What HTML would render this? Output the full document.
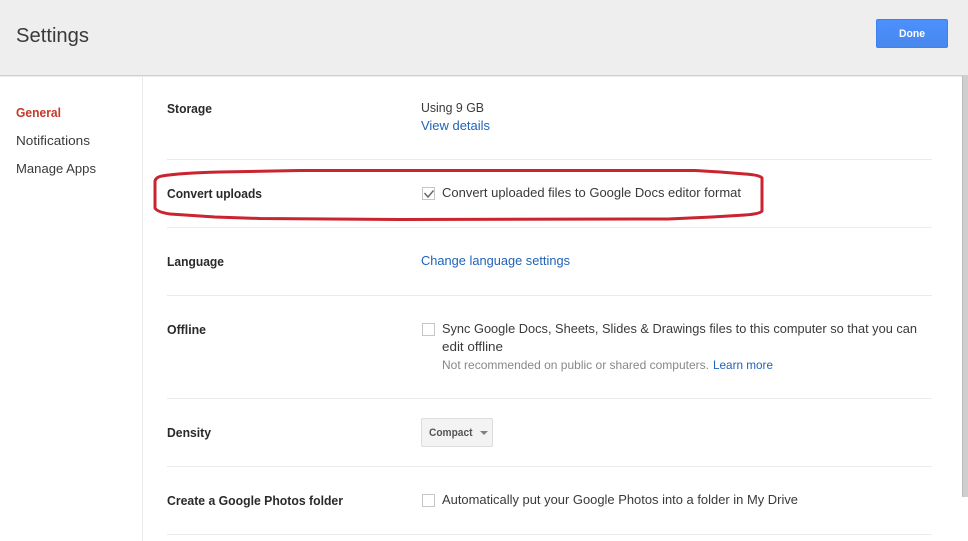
<!DOCTYPE html>
<html>
<head>
<meta charset="utf-8">
<style>
html,body{margin:0;padding:0;background:#fff;width:968px;height:541px;overflow:hidden}
svg{display:block;position:absolute;left:0;top:0}
text{font-family:"Liberation Sans",sans-serif;font-size:13px;fill:#3a3a3a}
.b{font-weight:700;fill:#2a2a2a}
.l{fill:#2163b8}
</style>
</head>
<body>
<svg width="968" height="541" viewBox="0 0 968 541" xmlns="http://www.w3.org/2000/svg">
<defs>
<linearGradient id="g" x1="0" y1="0" x2="0" y2="1"><stop offset="0" stop-color="#4d90fe"/><stop offset="1" stop-color="#4787ed"/></linearGradient>
</defs>
<rect x="0" y="0" width="968" height="75" fill="#eeeeee"/>
<rect x="0" y="75" width="968" height="1" fill="#cfcfcf"/>
<rect x="0" y="76" width="968" height="1" fill="#ececec"/>
<text x="16" y="42" style="font-size:20px;fill:#3a3a3a" textLength="73" lengthAdjust="spacingAndGlyphs">Settings</text>
<rect x="876.500" y="19.500" width="71" height="28" rx="1.500" fill="url(#g)" stroke="#3d82ee"/>
<text x="899" y="37" style="font-size:11px;font-weight:700;fill:#fff" textLength="26" lengthAdjust="spacingAndGlyphs">Done</text>

<rect x="142" y="76" width="1" height="465" fill="#ebebeb"/>
<rect x="962" y="76" width="6" height="421" fill="#cfcfcf"/>
<rect x="962" y="76" width="1" height="421" fill="#bcbcbc"/>

<text x="16" y="117" style="font-weight:700;fill:#c53929" textLength="45" lengthAdjust="spacingAndGlyphs">General</text>
<text x="16" y="145" textLength="74" lengthAdjust="spacingAndGlyphs">Notifications</text>
<text x="16" y="173" textLength="80" lengthAdjust="spacingAndGlyphs">Manage Apps</text>

<g fill="#ebebeb">
<rect x="167" y="159" width="765" height="1"/>
<rect x="167" y="227" width="765" height="1"/>
<rect x="167" y="295" width="765" height="1"/>
<rect x="167" y="398" width="765" height="1"/>
<rect x="167" y="466" width="765" height="1"/>
<rect x="167" y="534" width="765" height="1"/>
</g>

<text class="b" x="167" y="113" textLength="45" lengthAdjust="spacingAndGlyphs">Storage</text>
<text class="b" x="167" y="198" textLength="95" lengthAdjust="spacingAndGlyphs">Convert uploads</text>
<text class="b" x="167" y="266" textLength="57" lengthAdjust="spacingAndGlyphs">Language</text>
<text class="b" x="167" y="334" textLength="39" lengthAdjust="spacingAndGlyphs">Offline</text>
<text class="b" x="167" y="437" textLength="44" lengthAdjust="spacingAndGlyphs">Density</text>
<text class="b" x="167" y="505" textLength="176" lengthAdjust="spacingAndGlyphs">Create a Google Photos folder</text>

<text x="421" y="112" textLength="63" lengthAdjust="spacingAndGlyphs">Using 9 GB</text>
<text class="l" x="421" y="130" textLength="69" lengthAdjust="spacingAndGlyphs">View details</text>

<rect x="422.500" y="187.500" width="12" height="12" fill="#fff" stroke="#c6c6c6"/>
<path d="M424.500 193 L428 197 L433.500 190.500" fill="none" stroke="#666" stroke-width="1.400"/>
<text x="442" y="197" textLength="299" lengthAdjust="spacingAndGlyphs">Convert uploaded files to Google Docs editor format</text>

<text class="l" x="421" y="265" textLength="149" lengthAdjust="spacingAndGlyphs">Change language settings</text>

<rect x="422.500" y="323.500" width="12" height="12" fill="#fff" stroke="#c6c6c6"/>
<text x="442" y="333" textLength="475" lengthAdjust="spacingAndGlyphs">Sync Google Docs, Sheets, Slides &amp; Drawings files to this computer so that you can</text>
<text x="442" y="351" textLength="61" lengthAdjust="spacingAndGlyphs">edit offline</text>
<text x="442" y="369" style="font-size:12px;fill:#888" textLength="267" lengthAdjust="spacingAndGlyphs">Not recommended on public or shared computers.</text>
<text class="l" x="713" y="369" style="font-size:12px" textLength="60" lengthAdjust="spacingAndGlyphs">Learn more</text>

<rect x="421.500" y="418.500" width="71" height="28" rx="1.500" fill="#f3f3f3" stroke="#dcdcdc"/>
<text x="429" y="436" style="font-size:11px;font-weight:700;fill:#555" textLength="43.500" lengthAdjust="spacingAndGlyphs">Compact</text>
<path d="M480 431 L488 431 L484 435 Z" fill="#808080"/>

<rect x="422.500" y="494.500" width="12" height="12" fill="#fff" stroke="#c6c6c6"/>
<text x="442" y="504" textLength="356" lengthAdjust="spacingAndGlyphs">Automatically put your Google Photos into a folder in My Drive</text>

<path d="M155 196 L155 181 Q156 177 162 176 Q180 173 220 172 L300 170.500 L695 170.500 L720 172 L745 174 Q760 175 762 178 L762 211 Q760 214 745 215 L712 217 L668 219 L400 219.500 L260 218.500 L215 217 L170 214 Q157 212 155 208 Z" fill="none" stroke="#c9242f" stroke-width="3" stroke-linejoin="round"/>
</svg>
</body>
</html>
